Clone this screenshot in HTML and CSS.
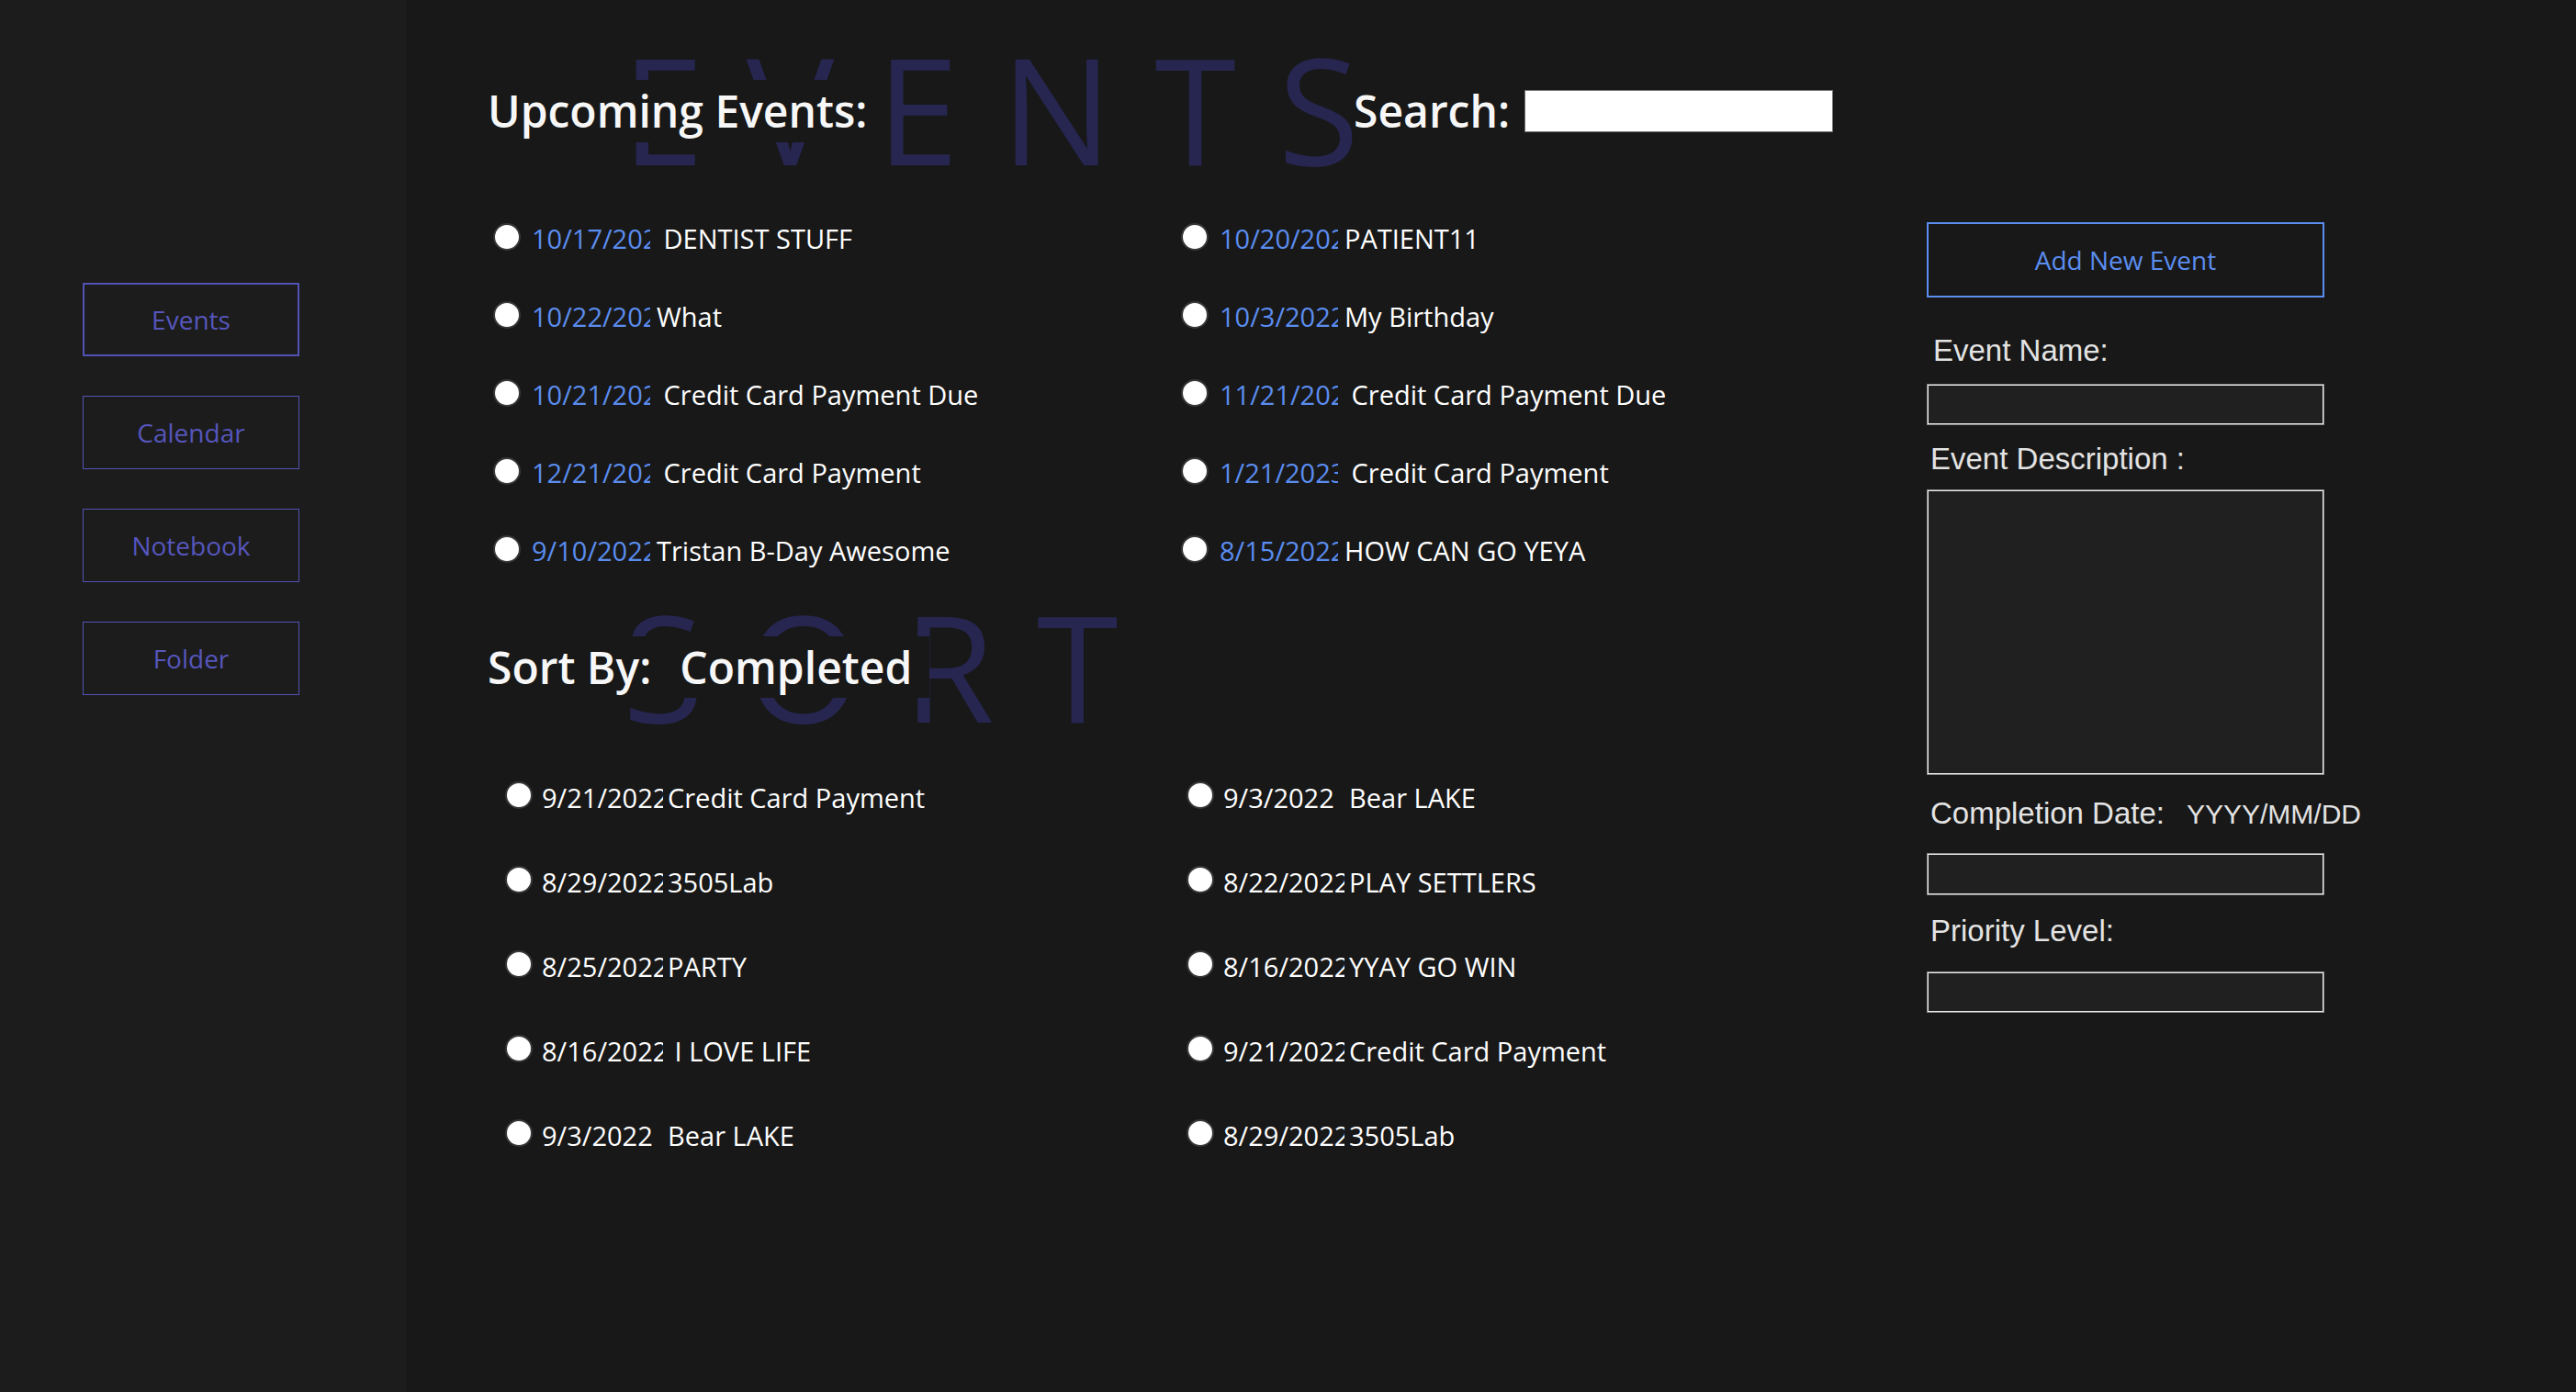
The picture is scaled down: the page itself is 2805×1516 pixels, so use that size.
FILE: index.html
```html
<!DOCTYPE html>
<html lang="en">
<head>
<meta charset="utf-8">
<title>Events</title>
<link rel="stylesheet" href="styles.css">
</head>
<body>
<div class="app">
  <aside class="sidebar">
    <nav class="nav">
      <button class="nav-btn active">Events</button>
      <button class="nav-btn">Calendar</button>
      <button class="nav-btn">Notebook</button>
      <button class="nav-btn">Folder</button>
    </nav>
  </aside>

  <main class="main">
    <div class="watermark wm-events" aria-hidden="true">EVENTS</div>
    <div class="watermark wm-sort" aria-hidden="true">SORT</div>

    <section class="content">
      <header class="head">
        <h1 class="title">Upcoming Events:</h1>
        <div class="search">
          <label class="search-label" for="search">Search:</label>
          <input class="search-input" id="search" type="text">
        </div>
      </header>

      <div class="list upcoming">
        <ul class="col">
          <li class="row"><input class="radio" type="radio" name="up"><span class="date">10/17/2022</span><span class="name"> DENTIST STUFF</span></li>
          <li class="row"><input class="radio" type="radio" name="up"><span class="date">10/22/2022</span><span class="name">What</span></li>
          <li class="row"><input class="radio" type="radio" name="up"><span class="date">10/21/2022</span><span class="name"> Credit Card Payment Due</span></li>
          <li class="row"><input class="radio" type="radio" name="up"><span class="date">12/21/2022</span><span class="name"> Credit Card Payment</span></li>
          <li class="row"><input class="radio" type="radio" name="up"><span class="date">9/10/2022</span><span class="name">Tristan B-Day Awesome</span></li>
        </ul>
        <ul class="col">
          <li class="row"><input class="radio" type="radio" name="up"><span class="date">10/20/2022</span><span class="name">PATIENT11</span></li>
          <li class="row"><input class="radio" type="radio" name="up"><span class="date">10/3/2022</span><span class="name">My Birthday</span></li>
          <li class="row"><input class="radio" type="radio" name="up"><span class="date">11/21/2022</span><span class="name"> Credit Card Payment Due</span></li>
          <li class="row"><input class="radio" type="radio" name="up"><span class="date">1/21/2023</span><span class="name"> Credit Card Payment</span></li>
          <li class="row"><input class="radio" type="radio" name="up"><span class="date">8/15/2022</span><span class="name">HOW CAN GO YEYA</span></li>
        </ul>
      </div>

      <div class="sort-head">
        <h2 class="sort-label">Sort By:</h2>
        <span class="sort-select">Completed</span>
      </div>

      <div class="list completed">
        <ul class="col">
          <li class="row"><input class="radio" type="radio" name="done"><span class="date">9/21/2022</span><span class="name">Credit Card Payment</span></li>
          <li class="row"><input class="radio" type="radio" name="done"><span class="date">8/29/2022</span><span class="name">3505Lab</span></li>
          <li class="row"><input class="radio" type="radio" name="done"><span class="date">8/25/2022</span><span class="name">PARTY</span></li>
          <li class="row"><input class="radio" type="radio" name="done"><span class="date">8/16/2022</span><span class="name"> I LOVE LIFE</span></li>
          <li class="row"><input class="radio" type="radio" name="done"><span class="date">9/3/2022</span><span class="name">Bear LAKE</span></li>
        </ul>
        <ul class="col">
          <li class="row"><input class="radio" type="radio" name="done"><span class="date">9/3/2022</span><span class="name">Bear LAKE</span></li>
          <li class="row"><input class="radio" type="radio" name="done"><span class="date">8/22/2022</span><span class="name">PLAY SETTLERS</span></li>
          <li class="row"><input class="radio" type="radio" name="done"><span class="date">8/16/2022</span><span class="name">YYAY GO WIN</span></li>
          <li class="row"><input class="radio" type="radio" name="done"><span class="date">9/21/2022</span><span class="name">Credit Card Payment</span></li>
          <li class="row"><input class="radio" type="radio" name="done"><span class="date">8/29/2022</span><span class="name">3505Lab</span></li>
        </ul>
      </div>
    </section>

    <aside class="panel">
      <button class="add-btn">Add New Event</button>
      <label class="field-label lbl-name" for="ev-name">Event Name:</label>
      <input class="field field-name" id="ev-name" type="text">
      <label class="field-label lbl-desc" for="ev-desc">Event Description :</label>
      <textarea class="field field-desc" id="ev-desc"></textarea>
      <label class="field-label lbl-date" for="ev-date">Completion Date:<span class="hint">YYYY/MM/DD</span></label>
      <input class="field field-date" id="ev-date" type="text">
      <label class="field-label lbl-prio" for="ev-prio">Priority Level:</label>
      <input class="field field-prio" id="ev-prio" type="text">
    </aside>
  </main>
</div>
</body>
</html>
```

FILE: styles.css
```css
* { box-sizing: border-box; }

html, body {
  margin: 0;
  padding: 0;
  background: #181818;
}

body {
  font-family: "Open Sans", "Noto Sans", sans-serif;
  color: #ffffff;
}

.app {
  display: flex;
  min-height: 1516px;
}

/* ---------- sidebar ---------- */
.sidebar {
  width: 442px;
  flex: none;
  background: #1c1c1c;
}

.nav {
  display: flex;
  flex-direction: column;
  gap: 43px;
  padding: 308px 0 0 90px;
}

.nav-btn {
  width: 236px;
  height: 80px;
  border: 1px solid #5252b5;
  background: transparent;
  color: #5656bd;
  font-family: "Open Sans", "Noto Sans", sans-serif;
  font-size: 28px;
  padding: 0;
}

.nav-btn.active {
  border-width: 2px;
}

/* ---------- main ---------- */
.main {
  position: relative;
  flex: 1;
  display: grid;
  grid-template-columns: 1656px 433px;
  align-items: start;
  background: #181818;
}

.watermark {
  position: absolute;
  z-index: 0;
  font-family: "Open Sans", "Noto Sans", sans-serif;
  font-size: 161px;
  line-height: 1;
  letter-spacing: 46px;
  color: #262651;
  white-space: nowrap;
}

.wm-events { left: 235px; top: 37px; }
.wm-sort { left: 236px; top: 644px; }

.content {
  position: relative;
  z-index: 1;
  padding: 87px 0 0 89px;
}

.head {
  display: grid;
  grid-template-columns: 943px auto;
  align-items: center;
  height: 68px;
}

.title,
.sort-label,
.search-label,
.sort-select {
  font-size: 48px;
  font-weight: 600;
  color: #f7f7f7;
}

.title {
  justify-self: start;
  margin: 0;
  line-height: 68px;
  background: #181818;
}

.search {
  display: flex;
  align-items: center;
  gap: 16px;
}

.search-label {
  line-height: 68px;
}

.search-input {
  width: 336px;
  height: 46px;
  background: #ffffff;
  border: 1px solid #767676;
  padding: 0;
}

/* ---------- lists ---------- */
.list {
  display: flex;
}

.upcoming { margin-top: 60px; }
.completed { margin-top: 60px; }

.col {
  list-style: none;
  margin: 0;
  padding: 0;
  width: 749px;
}

.completed .col { width: 742px; }

.row {
  display: flex;
  align-items: center;
  height: 85px;
  padding-left: 6px;
  font-size: 29px;
}

.completed .row {
  height: 92px;
  padding-left: 19px;
}

.radio {
  appearance: none;
  -webkit-appearance: none;
  flex: none;
  width: 30px;
  height: 30px;
  margin: 0;
  border-radius: 50%;
  background: #ffffff;
  border: 2px solid #383838;
}

.date {
  flex: none;
  width: 129px;
  margin-left: 12px;
  overflow: hidden;
  white-space: nowrap;
  color: #5b8def;
  padding-top: 4px;
}

.completed .date {
  width: 132px;
  margin-left: 10px;
  color: #ffffff;
}

.name {
  white-space: pre;
  margin-left: 7px;
  color: #ffffff;
  padding-top: 4px;
}

.completed .name { margin-left: 5px; }

/* ---------- sort header ---------- */
.sort-head {
  display: flex;
  align-items: center;
  width: fit-content;
  height: 67px;
  margin-top: 53px;
  padding-right: 19px;
  background: #181818;
}

.sort-label {
  margin: 0;
}

.sort-select {
  margin-left: 31px;
}

/* ---------- right panel ---------- */
.panel {
  position: relative;
  z-index: 1;
  display: flex;
  flex-direction: column;
  padding-top: 242px;
}

.add-btn {
  width: 433px;
  height: 82px;
  border: 2px solid #5b8def;
  background: transparent;
  color: #5b8def;
  font-family: "Open Sans", "Noto Sans", sans-serif;
  font-size: 28px;
  padding: 0;
}

.field-label {
  display: block;
  font-family: "Liberation Sans", Arial, sans-serif;
  font-size: 33px;
  line-height: 37px;
  color: #e3e3e3;
  padding-left: 4px;
  white-space: nowrap;
}

.hint {
  font-size: 30px;
  margin-left: 24px;
}

.lbl-name { margin-top: 39px; padding-left: 7px; }
.lbl-desc { margin-top: 18px; }
.lbl-date { margin-top: 23px; }
.lbl-prio { margin-top: 20px; }

.field {
  display: block;
  width: 433px;
  height: 45px;
  margin: 0;
  padding: 0;
  background: #202020;
  border: 1px solid #8c8c8c;
  box-shadow: inset 0 0 0 1px #ededed;
  resize: none;
}

.field-name { margin-top: 18px; }
.field-desc { margin-top: 15px; height: 311px; }
.field-date { margin-top: 24px; height: 46px; }
.field-prio { margin-top: 26px; }
```
